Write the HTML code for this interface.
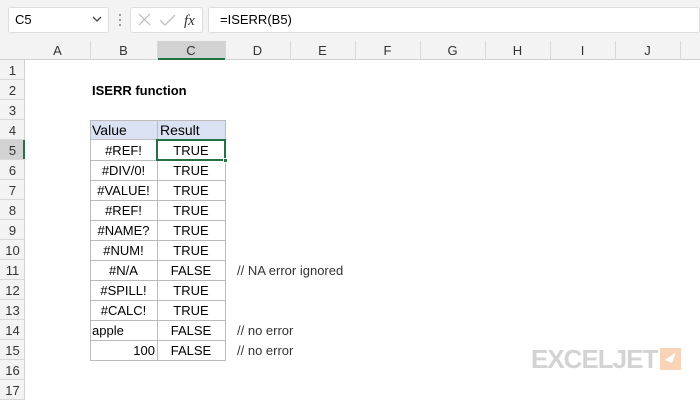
<!DOCTYPE html><html><head><style>
body{margin:0;width:700px;height:400px;overflow:hidden;background:#fff;font-family:"Liberation Sans",sans-serif;position:relative}
.a{position:absolute;box-sizing:border-box}
.t{font-size:13px;color:#000}
</style></head><body>
<div class="a" style="left:0;top:0;width:700px;height:41px;background:#f3f3f3"></div>
<div class="a" style="left:8px;top:7px;width:101px;height:26px;background:#fff;border:1px solid #ddd;border-radius:3px"></div>
<div class="a t" style="left:15px;top:12px">C5</div>
<svg class="a" style="left:92px;top:16px" width="10" height="7"><path d="M1 1L5 5L9 1" stroke="#444" fill="none" stroke-width="1.3"/></svg>
<div class="a" style="left:119px;top:14px;width:2px;height:2px;background:#999;box-shadow:0 5px #999,0 10px #999"></div>
<div class="a" style="left:130px;top:7px;width:73px;height:26px;background:#fff;border:1px solid #ddd;border-radius:3px"></div>
<svg class="a" style="left:136px;top:12px" width="64" height="16"><path d="M3 2L14 13M14 2L3 13" stroke="#bbb" stroke-width="1.2"/><path d="M24 8L29 13L39 3" stroke="#bbb" fill="none" stroke-width="1.2"/><text x="48" y="13" font-family="Liberation Serif" font-style="italic" font-size="15" fill="#333">fx</text></svg>
<div class="a" style="left:208px;top:7px;width:492px;height:26px;background:#fff;border:1px solid #ddd;border-radius:3px"></div>
<div class="a t" style="left:220px;top:12px">=ISERR(B5)</div>
<div class="a" style="left:0;top:41px;width:700px;height:19px;background:#f3f3f3;border-bottom:1px solid #d0d0d0"></div>
<div class="a" style="left:0;top:60px;width:25px;height:340px;background:#f3f3f3;border-right:1px solid #d0d0d0"></div>
<div class="a" style="left:157px;top:41px;width:68px;height:19px;background:#d2d2d2;border-bottom:2px solid #217346"></div>
<div class="a" style="left:0;top:140px;width:25px;height:20px;background:#d2d2d2;border-right:2px solid #217346"></div>
<div id="g"></div>
<script>
var cols=[["A",25,90],["B",90,157],["C",157,225],["D",225,290],["E",290,355],["F",355,420],["G",420,485],["H",485,550],["I",550,615],["J",615,680],["",680,745]];
var h="";
cols.forEach(function(c){h+='<div class="a" style="left:'+c[2]+'px;top:41px;width:1px;height:19px;background:#d8d8d8"></div><div class="a t" style="left:'+c[1]+'px;top:43px;width:'+(c[2]-c[1])+'px;text-align:center;color:#333">'+c[0]+'</div>';});
for(var r=1;r<=17;r++){var y=60+(r-1)*20;h+='<div class="a" style="left:0;top:'+(y+19)+'px;width:25px;height:1px;background:#d8d8d8"></div><div class="a t" style="left:0;top:'+(y+3)+'px;width:25px;text-align:center;color:#333">'+r+'</div>';}
var d=[["#REF!","TRUE"],["#DIV/0!","TRUE"],["#VALUE!","TRUE"],["#REF!","TRUE"],["#NAME?","TRUE"],["#NUM!","TRUE"],["#N/A","FALSE","// NA error ignored"],["#SPILL!","TRUE"],["#CALC!","TRUE"],["apple","FALSE","// no error","l"],["100","FALSE","// no error","r"]];
h+='<div class="a" style="left:90px;top:120px;width:136px;height:20px;background:#d9e1f2;border:1px solid #bbb"></div><div class="a" style="left:157px;top:120px;width:1px;height:241px;background:#bbb"></div>';
h+='<div class="a t" style="left:92px;top:122px;font-size:14px">Value</div><div class="a t" style="left:160px;top:122px;font-size:14px">Result</div>';
d.forEach(function(x,i){var y=140+i*20;h+='<div class="a" style="left:90px;top:'+y+'px;width:136px;height:21px;border:1px solid #bbb;border-top:none"></div>';
var al=x[3]=="l"?"left:92px;":x[3]=="r"?"left:90px;width:65px;text-align:right;":"left:90px;width:67px;text-align:center;";
h+='<div class="a t" style="'+al+'top:'+(y+3)+'px">'+x[0]+'</div><div class="a t" style="left:157px;width:68px;text-align:center;top:'+(y+3)+'px">'+x[1]+'</div>';
if(x[2])h+='<div class="a t" style="left:237px;top:'+(y+3)+'px;color:#333">'+x[2]+'</div>';});
h+='<div class="a t" style="left:92px;top:83px;font-weight:bold">ISERR function</div>';
h+='<div class="a" style="left:156px;top:139px;width:70px;height:22px;border:2px solid #217346"></div><div class="a" style="left:223px;top:158px;width:5px;height:5px;background:#217346;border:1px solid #fff"></div>';
document.getElementById("g").innerHTML=h;
</script>
<div class="a" style="left:531px;top:344px;font-size:26px;font-weight:bold;color:#d3d3d3;letter-spacing:-1px">EXCELJET</div>
<div class="a" style="left:660px;top:348px;width:21px;height:22px;background:#f8d3b8"></div>
<svg class="a" style="left:660px;top:348px" width="21" height="22"><path d="M16 4L5 12L12 15Z" fill="#fff"/></svg>
</body></html>
